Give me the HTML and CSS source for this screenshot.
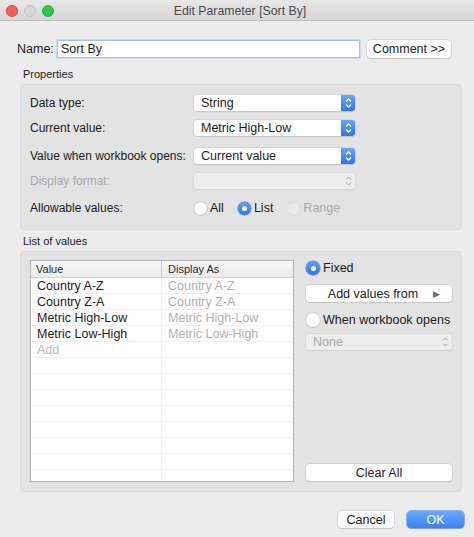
FILE: index.html
```html
<!DOCTYPE html>
<html>
<head>
<meta charset="utf-8">
<title>Edit Parameter [Sort By]</title>
<link rel="stylesheet" href="styles.css">
</head>
<body>
<div class="window">
  <div class="titlebar">
    <div class="lights">
      <span class="light red"></span>
      <span class="light grey"></span>
      <span class="light green"></span>
    </div>
    <div class="title">Edit Parameter [Sort By]</div>
    <div></div>
  </div>

  <div class="name-row">
    <span class="name-label">Name:</span>
    <div class="text-input">Sort By</div>
    <div class="btn comment-btn">Comment &gt;&gt;</div>
  </div>

  <div class="group-label props-label">Properties</div>
  <div class="panel props">
    <div class="prop-row r1">
      <span class="prop-label">Data type:</span>
      <div class="select"><span class="sel-text">String</span><span class="sel-arrow"><svg width="13" height="16" viewBox="0 0 13 16"><path d="M4 6.5 L6.5 4 L9 6.5 M4 9.5 L6.5 12 L9 9.5" fill="none" stroke="#fff" stroke-width="1.3"/></svg></span></div>
    </div>
    <div class="prop-row r2">
      <span class="prop-label">Current value:</span>
      <div class="select"><span class="sel-text">Metric High-Low</span><span class="sel-arrow"><svg width="13" height="16" viewBox="0 0 13 16"><path d="M4 6.5 L6.5 4 L9 6.5 M4 9.5 L6.5 12 L9 9.5" fill="none" stroke="#fff" stroke-width="1.3"/></svg></span></div>
    </div>
    <div class="prop-row r3">
      <span class="prop-label">Value when workbook opens:</span>
      <div class="select"><span class="sel-text">Current value</span><span class="sel-arrow"><svg width="13" height="16" viewBox="0 0 13 16"><path d="M4 6.5 L6.5 4 L9 6.5 M4 9.5 L6.5 12 L9 9.5" fill="none" stroke="#fff" stroke-width="1.3"/></svg></span></div>
    </div>
    <div class="prop-row r4">
      <span class="prop-label disabled">Display format:</span>
      <div class="select off"><span class="sel-text"></span><span class="sel-arrow-off"><svg width="13" height="16" viewBox="0 0 13 16"><path d="M4 6.5 L6.5 4 L9 6.5 M4 9.5 L6.5 12 L9 9.5" fill="none" stroke="#a0a0a0" stroke-width="1"/></svg></span></div>
    </div>
    <div class="prop-row r5">
      <span class="prop-label">Allowable values:</span>
      <div class="radios">
        <span class="radio-item"><span class="radio"></span>All</span>
        <span class="radio-item"><span class="radio on"></span>List</span>
        <span class="radio-item disabled"><span class="radio off"></span>Range</span>
      </div>
    </div>
  </div>

  <div class="group-label list-label">List of values</div>
  <div class="panel list">
    <div class="table">
      <div class="thead">
        <div class="th c1">Value</div>
        <div class="th c2">Display As</div>
      </div>
      <div class="tbody">
        <div class="tr"><div class="td c1">Country A-Z</div><div class="td c2 dim">Country A-Z</div></div>
        <div class="tr"><div class="td c1">Country Z-A</div><div class="td c2 dim">Country Z-A</div></div>
        <div class="tr"><div class="td c1">Metric High-Low</div><div class="td c2 dim">Metric High-Low</div></div>
        <div class="tr"><div class="td c1">Metric Low-High</div><div class="td c2 dim">Metric Low-High</div></div>
        <div class="tr"><div class="td c1 add">Add</div><div class="td c2"></div></div>
        <div class="tr"><div class="td c1"></div><div class="td c2"></div></div>
        <div class="tr"><div class="td c1"></div><div class="td c2"></div></div>
        <div class="tr"><div class="td c1"></div><div class="td c2"></div></div>
        <div class="tr"><div class="td c1"></div><div class="td c2"></div></div>
        <div class="tr"><div class="td c1"></div><div class="td c2"></div></div>
        <div class="tr"><div class="td c1"></div><div class="td c2"></div></div>
        <div class="tr"><div class="td c1"></div><div class="td c2"></div></div>
        <div class="tr last"><div class="td c1"></div><div class="td c2"></div></div>
      </div>
    </div>
    <div class="side">
      <div class="radio-item side-radio"><span class="radio on"></span>Fixed</div>
      <div class="btn side-btn add-btn"><span>Add values from</span><span class="tri">&#9654;</span></div>
      <div class="radio-item side-radio wwo"><span class="radio"></span>When workbook opens</div>
      <div class="select off none-sel"><span class="sel-text">None</span><span class="sel-arrow-off"><svg width="13" height="16" viewBox="0 0 13 16"><path d="M4 6.5 L6.5 4 L9 6.5 M4 9.5 L6.5 12 L9 9.5" fill="none" stroke="#a0a0a0" stroke-width="1"/></svg></span></div>
      <div class="btn side-btn clear-btn">Clear All</div>
    </div>
  </div>

  <div class="footer">
    <div class="btn cancel-btn">Cancel</div>
    <div class="btn ok-btn">OK</div>
  </div>
</div>
</body>
</html>
```

FILE: styles.css
```css
* { box-sizing: border-box; }

html, body {
  margin: 0;
  padding: 0;
}

body {
  width: 474px;
  height: 537px;
  overflow: hidden;
  background: #ececec;
  font-family: "Liberation Sans", Arial, sans-serif;
  font-size: 12px;
  color: #1c1c1c;
}

.window {
  display: flex;
  flex-direction: column;
  height: 537px;
}

/* title bar */
.titlebar {
  height: 21px;
  padding-top: 1px;
  display: grid;
  grid-template-columns: 1fr auto 1fr;
  align-items: center;
  background: linear-gradient(#e8e8e8, #d6d6d6);
  border-bottom: 1px solid #bdbdbd;
}

.lights {
  display: flex;
  gap: 6px;
  padding-left: 6px;
}

.light {
  width: 12px;
  height: 12px;
  border-radius: 50%;
}
.light.red { background: #fc5e57; border: 1px solid #e2463f; }
.light.grey { background: #d6d6d6; border: 1px solid #c6c6c6; }
.light.green { background: #32c748; border: 1px solid #22ad33; }

.title {
  font-size: 12.3px;
  color: #4a4a4a;
  padding-left: 6px;
}

/* name row */
.name-row {
  display: flex;
  align-items: center;
  margin-top: 19px;
  padding-left: 17px;
  height: 18px;
}

.name-label {
  width: 40px;
  font-size: 12.5px;
}

.text-input {
  width: 303px;
  height: 18px;
  background: #fff;
  border: 1px solid #a9c1e4;
  box-shadow: 0 0 0 1px #cfdcf0;
  padding-left: 3px;
  line-height: 16px;
  font-size: 12.5px;
}

.btn {
  background: #fff;
  border-radius: 4px;
  box-shadow: 0 0 0 0.5px #c4c4c4, 0 1px 1px rgba(0,0,0,0.14);
  display: flex;
  align-items: center;
  justify-content: center;
  font-size: 12.5px;
  color: #222;
}

.comment-btn {
  width: 84px;
  height: 18px;
  margin-left: 7px;
}

/* group labels */
.group-label {
  font-size: 11px;
  line-height: 14px;
  padding-left: 23px;
  color: #222;
}

.props-label { margin-top: 9px; }
.list-label { margin-top: 4px; }

.panel {
  margin-left: 20px;
  width: 442px;
  background: #e3e3e3;
  border: 1px solid #dcdcdc;
  border-radius: 4px;
}

.props {
  margin-top: 3px;
  height: 146px;
  padding: 10px 0 0 9px;
  display: flex;
  flex-direction: column;
}

.prop-row {
  display: flex;
  align-items: center;
  height: 16px;
  font-size: 12px;
}
.r2 { margin-top: 9px; }
.r3 { margin-top: 12px; }
.r4 { margin-top: 9px; }
.r5 { margin-top: 11px; }

.prop-label {
  width: 164px;
}

.disabled { color: #a9a9a9; }

/* select */
.select {
  width: 161px;
  height: 16px;
  background: #fff;
  border-radius: 3px;
  box-shadow: 0 0 0 0.5px #c6c6c6, 0 1px 1px rgba(0,0,0,0.12);
  display: flex;
  align-items: center;
  justify-content: space-between;
}

.sel-text {
  padding-left: 7px;
  font-size: 12.5px;
}

.sel-arrow {
  width: 14px;
  height: 16px;
  border-radius: 0 3px 3px 0;
  background: linear-gradient(#6ba6f9, #2f73ef);
  display: flex;
  align-items: center;
  justify-content: center;
}

.sel-arrow-off {
  width: 14px;
  height: 16px;
  display: flex;
  align-items: center;
  justify-content: center;
}

.select.off {
  background: #ededed;
  box-shadow: 0 0 0 0.5px #d2d2d2, 0 1px 1px rgba(0,0,0,0.06);
}
.select.off .sel-text { color: #a9a9a9; }

/* radios */
.radios {
  display: flex;
  align-items: center;
  font-size: 12.5px;
}

.radio-item {
  display: flex;
  align-items: center;
  gap: 3px;
  margin-right: 14px;
}

.radio {
  width: 13px;
  height: 13px;
  border-radius: 50%;
  background: #fff;
  box-shadow: 0 0 0 0.5px #bdbdbd, 0 1px 1px rgba(0,0,0,0.12);
  display: flex;
  align-items: center;
  justify-content: center;
}

.radio.on {
  background: linear-gradient(#5d9cf8, #2f74ee);
  box-shadow: 0 0 0 0.5px #2f6ed8;
}
.radio.on::after {
  content: "";
  width: 5px;
  height: 5px;
  border-radius: 50%;
  background: #fff;
}

.radio.off {
  background: #e8e8e8;
  box-shadow: 0 0 0 0.5px #d4d4d4;
}

/* list panel */
.list {
  margin-top: 3px;
  height: 241px;
  padding: 8px 9px 10px 9px;
  display: flex;
}

.table {
  width: 264px;
  height: 222px;
  background: #fff;
  border: 1px solid #b4b4b4;
  overflow: hidden;
  display: flex;
  flex-direction: column;
}

.thead {
  display: flex;
  height: 17px;
  flex: none;
  background: linear-gradient(#f7f7f7, #ececec);
  border-bottom: 1px solid #d4d4d4;
  font-size: 11px;
  color: #2a2a2a;
}

.th {
  display: flex;
  align-items: center;
}

.c1 { width: 131px; padding-left: 5px; }
.c2 { flex: 1; padding-left: 6px; }

.th.c1 { border-right: 1px solid #c9c9c9; }

.tbody { display: flex; flex-direction: column; }

.tr {
  display: flex;
  height: 16px;
  flex: none;
  border-bottom: 1px solid #f1f1f1;
  font-size: 12.5px;
}

.td {
  display: flex;
  align-items: center;
  white-space: nowrap;
}
.td.c1 { border-right: 1px solid #f3f3f3; padding-left: 6px; }
.dim { color: #b2b2b2; }
.add { color: #b8b8b8; }

.side {
  margin-left: 12px;
  width: 146px;
  display: flex;
  flex-direction: column;
}

.side-radio {
  height: 16px;
  font-size: 12.5px;
  margin-right: 0;
}

.side-radio .radio { width: 14px; height: 14px; }

.side-btn { width: 146px; height: 17px; }

.add-btn {
  margin-top: 9px;
  position: relative;
  padding-right: 12px;
  gap: 0;
}
.add-btn .tri {
  position: absolute;
  right: 12px;
  font-size: 9px;
  color: #707070;
}

.wwo { margin-top: 10px; }

.none-sel {
  width: 146px;
  margin-top: 6px;
}

.clear-btn { margin-top: auto; }

/* footer */
.footer {
  display: flex;
  justify-content: flex-end;
  gap: 13px;
  margin-top: 19px;
  padding-right: 10px;
}

.cancel-btn {
  width: 56px;
  height: 17px;
}

.ok-btn {
  width: 57px;
  height: 17px;
  background: linear-gradient(#6caafb, #3a80f4);
  box-shadow: 0 0 0 0.5px #3575e0, 0 1px 1px rgba(0,0,0,0.14);
  color: #fff;
}
```
